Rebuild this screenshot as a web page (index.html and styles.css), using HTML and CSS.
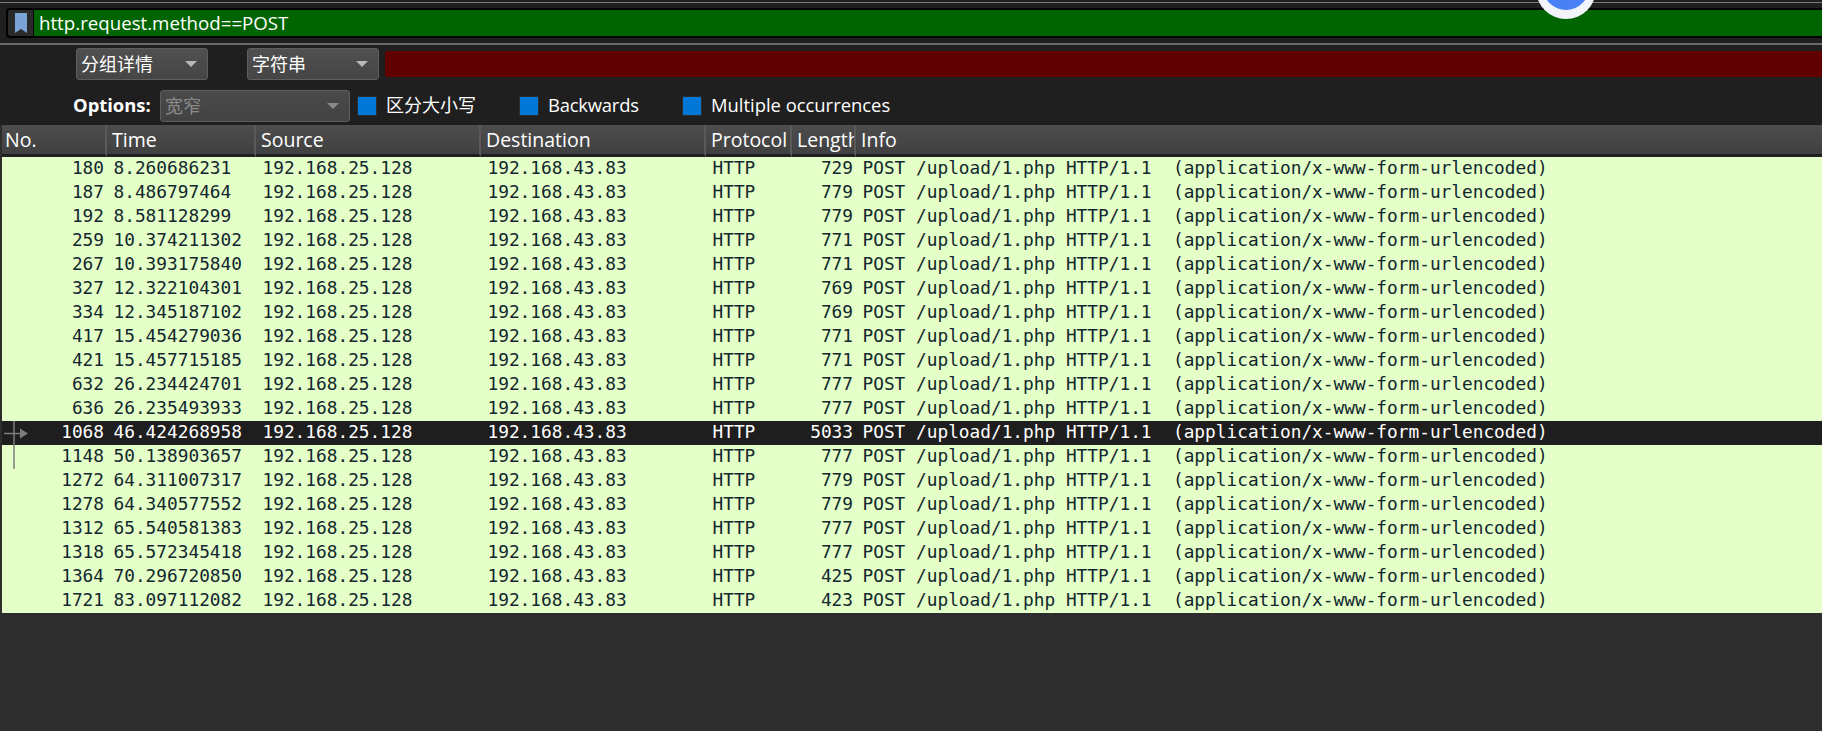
FILE: index.html
```html
<!DOCTYPE html>
<html lang="en">

<head>
    <meta charset="UTF-8">
    <title>http.request.method==POST</title>
    <link rel="stylesheet" href="styles.css">
</head>

<body>
    <div class="top-rule"></div>

    <div class="filter-bar">
        <div class="bookmark">
            <svg width="14" height="22" viewBox="0 0 14 22"><path d="M1 1h12v20l-6-4-6 4z" fill="#7ba3d6"/></svg>
        </div>
        <div class="filter-input">http.request.method==POST</div>
    </div>

    <div class="mid-rule"></div>

    <div class="search-row">
        <div class="combo combo-from"><span>分组详情</span><i class="arrow"></i></div>
        <div class="combo combo-type"><span>字符串</span><i class="arrow"></i></div>
        <div class="search-input"></div>
    </div>

    <div class="options-row">
        <b class="options-label">Options:</b>
        <div class="combo combo-width"><span>宽窄</span><i class="arrow"></i></div>
        <label class="check check-case"><i class="box"></i><span>区分大小写</span></label>
        <label class="check check-back"><i class="box"></i><span>Backwards</span></label>
        <label class="check"><i class="box"></i><span>Multiple occurrences</span></label>
    </div>

    <div class="packets">
        <table class="packet-list">
            <thead>
                <tr>
                    <th class="col-no">No.</th>
                    <th class="col-time">Time</th>
                    <th class="col-src">Source</th>
                    <th class="col-dst">Destination</th>
                    <th class="col-proto">Protocol</th>
                    <th class="col-len">Length</th>
                    <th class="col-info">Info</th>
                </tr>
            </thead>
            <tbody>
                <tr><td class="num">180</td><td>8.260686231</td><td>192.168.25.128</td><td>192.168.43.83</td><td>HTTP</td><td class="num">729</td><td>POST /upload/1.php HTTP/1.1  (application/x-www-form-urlencoded)</td></tr>
                <tr><td class="num">187</td><td>8.486797464</td><td>192.168.25.128</td><td>192.168.43.83</td><td>HTTP</td><td class="num">779</td><td>POST /upload/1.php HTTP/1.1  (application/x-www-form-urlencoded)</td></tr>
                <tr><td class="num">192</td><td>8.581128299</td><td>192.168.25.128</td><td>192.168.43.83</td><td>HTTP</td><td class="num">779</td><td>POST /upload/1.php HTTP/1.1  (application/x-www-form-urlencoded)</td></tr>
                <tr><td class="num">259</td><td>10.374211302</td><td>192.168.25.128</td><td>192.168.43.83</td><td>HTTP</td><td class="num">771</td><td>POST /upload/1.php HTTP/1.1  (application/x-www-form-urlencoded)</td></tr>
                <tr><td class="num">267</td><td>10.393175840</td><td>192.168.25.128</td><td>192.168.43.83</td><td>HTTP</td><td class="num">771</td><td>POST /upload/1.php HTTP/1.1  (application/x-www-form-urlencoded)</td></tr>
                <tr><td class="num">327</td><td>12.322104301</td><td>192.168.25.128</td><td>192.168.43.83</td><td>HTTP</td><td class="num">769</td><td>POST /upload/1.php HTTP/1.1  (application/x-www-form-urlencoded)</td></tr>
                <tr><td class="num">334</td><td>12.345187102</td><td>192.168.25.128</td><td>192.168.43.83</td><td>HTTP</td><td class="num">769</td><td>POST /upload/1.php HTTP/1.1  (application/x-www-form-urlencoded)</td></tr>
                <tr><td class="num">417</td><td>15.454279036</td><td>192.168.25.128</td><td>192.168.43.83</td><td>HTTP</td><td class="num">771</td><td>POST /upload/1.php HTTP/1.1  (application/x-www-form-urlencoded)</td></tr>
                <tr><td class="num">421</td><td>15.457715185</td><td>192.168.25.128</td><td>192.168.43.83</td><td>HTTP</td><td class="num">771</td><td>POST /upload/1.php HTTP/1.1  (application/x-www-form-urlencoded)</td></tr>
                <tr><td class="num">632</td><td>26.234424701</td><td>192.168.25.128</td><td>192.168.43.83</td><td>HTTP</td><td class="num">777</td><td>POST /upload/1.php HTTP/1.1  (application/x-www-form-urlencoded)</td></tr>
                <tr><td class="num">636</td><td>26.235493933</td><td>192.168.25.128</td><td>192.168.43.83</td><td>HTTP</td><td class="num">777</td><td>POST /upload/1.php HTTP/1.1  (application/x-www-form-urlencoded)</td></tr>
                <tr class="selected"><td class="num">1068</td><td>46.424268958</td><td>192.168.25.128</td><td>192.168.43.83</td><td>HTTP</td><td class="num">5033</td><td>POST /upload/1.php HTTP/1.1  (application/x-www-form-urlencoded)</td></tr>
                <tr><td class="num">1148</td><td>50.138903657</td><td>192.168.25.128</td><td>192.168.43.83</td><td>HTTP</td><td class="num">777</td><td>POST /upload/1.php HTTP/1.1  (application/x-www-form-urlencoded)</td></tr>
                <tr><td class="num">1272</td><td>64.311007317</td><td>192.168.25.128</td><td>192.168.43.83</td><td>HTTP</td><td class="num">779</td><td>POST /upload/1.php HTTP/1.1  (application/x-www-form-urlencoded)</td></tr>
                <tr><td class="num">1278</td><td>64.340577552</td><td>192.168.25.128</td><td>192.168.43.83</td><td>HTTP</td><td class="num">779</td><td>POST /upload/1.php HTTP/1.1  (application/x-www-form-urlencoded)</td></tr>
                <tr><td class="num">1312</td><td>65.540581383</td><td>192.168.25.128</td><td>192.168.43.83</td><td>HTTP</td><td class="num">777</td><td>POST /upload/1.php HTTP/1.1  (application/x-www-form-urlencoded)</td></tr>
                <tr><td class="num">1318</td><td>65.572345418</td><td>192.168.25.128</td><td>192.168.43.83</td><td>HTTP</td><td class="num">777</td><td>POST /upload/1.php HTTP/1.1  (application/x-www-form-urlencoded)</td></tr>
                <tr><td class="num">1364</td><td>70.296720850</td><td>192.168.25.128</td><td>192.168.43.83</td><td>HTTP</td><td class="num">425</td><td>POST /upload/1.php HTTP/1.1  (application/x-www-form-urlencoded)</td></tr>
                <tr><td class="num">1721</td><td>83.097112082</td><td>192.168.25.128</td><td>192.168.43.83</td><td>HTTP</td><td class="num">423</td><td>POST /upload/1.php HTTP/1.1  (application/x-www-form-urlencoded)</td></tr>
            </tbody>
        </table>

        <!-- related packet marker, sits over the selected row -->
        <svg class="marker" width="30" height="48" viewBox="0 0 30 48">
            <path d="M14 0v48M4 12.5h20" stroke="#7d7d7d" stroke-width="1.5" fill="none"/>
            <path d="M20 7.5l8 5-8 5z" fill="#7d7d7d"/>
        </svg>
    </div>

    <div class="float-ball"><div class="float-ball-inner"></div></div>
</body>

</html>
```

FILE: styles.css
```css
body {
    margin: 0;
    height: 731px;
    overflow: hidden;
    background-color: #1f1f1f;
    color: #fff;
    font-family: "Open Sans", "Noto Sans CJK SC", sans-serif;
    font-size: 18px;
    display: flex;
    flex-direction: column;
}

.top-rule {
    height: 1px;
    margin-top: 2px;
    background-color: #7c7c7c;
}

.filter-bar {
    display: flex;
    height: 26px;
    margin: 5px 0 0 6px;
    background-color: #2a2a2a;
    border: 2px solid #000;
    border-right: none;
    border-radius: 4px 0 0 4px;
}

.bookmark {
    width: 25px;
    display: flex;
    align-items: center;
    justify-content: center;
    border-right: 1px solid #000;
}

.filter-input {
    flex: 1;
    background-color: #006400;
    padding-left: 5px;
    line-height: 26px;
    font-size: 18.7px;
}

.mid-rule {
    height: 2px;
    margin-top: 5px;
    background-color: #6b6b6b;
}

.search-row {
    display: flex;
    align-items: center;
    height: 32px;
    margin-top: 3px;
    padding-left: 76px;
}

.combo {
    display: flex;
    align-items: center;
    justify-content: space-between;
    box-sizing: border-box;
    height: 32px;
    padding: 0 10px 2px 4px;
    background: linear-gradient(#505050, #454545);
    border: 1px solid #5e5e5e;
    border-radius: 3px;
    font-size: 18px;
}

.arrow {
    width: 0;
    height: 0;
    margin-top: 2px;
    border-left: 6px solid transparent;
    border-right: 6px solid transparent;
    border-top: 6px solid #b8b8b8;
}

.combo-from {
    width: 132px;
}

.combo-type {
    width: 132px;
    margin-left: 39px;
}

.search-input {
    flex: 1;
    height: 26px;
    margin-left: 6px;
    background-color: #600000;
    border-radius: 2px 0 0 2px;
}

.options-row {
    display: flex;
    align-items: center;
    height: 32px;
    margin-top: 10px;
    padding-left: 73px;
}

.options-label {
    width: 87px;
    padding-bottom: 3px;
    font-size: 18.4px;
}

.combo-width {
    width: 190px;
    background: linear-gradient(#4a4a4a, #424242);
    color: #8a8a8a;
}

.combo-width .arrow {
    border-top-color: #8a8a8a;
}

.check {
    display: flex;
    align-items: center;
    font-size: 18.4px;
    line-height: 20px;
}

.check span {
    margin-bottom: 2px;
}

.check-case {
    margin-left: 7px;
    width: 162px;
    font-size: 18px;
}

.check-back {
    width: 163px;
    letter-spacing: -0.2px;
}

.box {
    width: 18px;
    height: 18px;
    margin-right: 9px;
    background-color: #0078d7;
    border: 1px solid #2c2c2c;
}

.packets {
    position: relative;
    flex: 1;
    margin-top: 3px;
    padding-left: 2px;
    background-color: #2d2d2d;
}

.packet-list {
    width: 1820px;
    table-layout: fixed;
    border-spacing: 0;
}

.packet-list th {
    box-sizing: border-box;
    height: 32px;
    padding: 0 0 0 5px;
    text-align: left;
    font-weight: normal;
    font-size: 19.5px;
    white-space: nowrap;
    overflow: hidden;
    background: linear-gradient(#4d4d4d, #404040);
    border-right: 2px solid #5a5a5a;
    border-bottom: 3px solid #1f1f1f;
}

.col-no { width: 105px; }
.col-time { width: 149px; }
.col-src { width: 225px; }
.col-dst { width: 225px; }
.col-proto { width: 86px; }
.col-len { width: 64px; }

.packet-list th.col-no {
    padding-left: 3px;
}

.packet-list th.col-info {
    border-right: none;
}

.packet-list td {
    box-sizing: border-box;
    height: 24px;
    padding: 0 0 2px 6.5px;
    background-color: #e4ffc7;
    color: #12272e;
    font-family: "DejaVu Sans Mono", monospace;
    font-size: 17.8px;
    line-height: 22px;
    white-space: pre;
    overflow: hidden;
}

.packet-list td.num {
    padding: 0 3px 2px 0;
    text-align: right;
}

.packet-list .selected td {
    background-color: #1e1e1e;
    color: #fff;
}

.marker {
    position: absolute;
    left: 0;
    top: 296px;
}

.float-ball {
    position: absolute;
    left: 1536px;
    top: -41px;
    width: 60px;
    height: 60px;
    border-radius: 50%;
    background-color: #f2f4fa;
    display: flex;
    align-items: center;
    justify-content: center;
}

.float-ball-inner {
    width: 46px;
    height: 46px;
    margin-top: -4px;
    border-radius: 50%;
    background-color: #4a80f5;
}
```
